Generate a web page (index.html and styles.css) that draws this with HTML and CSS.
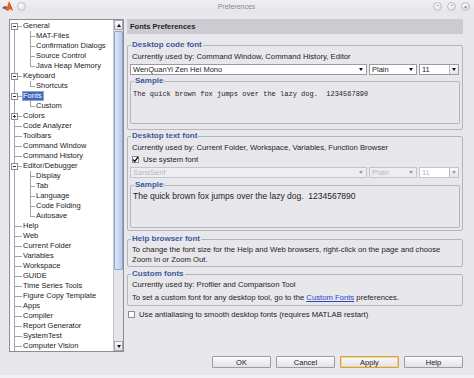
FILE: index.html
```html
<!DOCTYPE html>
<html lang="en">
<head>
  <meta charset="UTF-8">
  <title>Preferences</title>
  <link rel="stylesheet" href="styles.css">
</head>
<body>
<div class="window">

  <!-- title bar -->
  <div class="titlebar">
    <svg class="logo" width="11" height="11" viewBox="0 0 11 11">
      <path d="M0 7 L3 5 L5 6 L7 0 L11 10 L8 8 L6 10 Z" fill="#e8601c"/>
      <path d="M0 7 L3 5 L5 6 L3.5 8 Z" fill="#3a6fb5"/>
      <path d="M7 0 L11 10 L9 7 Z" fill="#b8320e"/>
    </svg>
    <span class="menu-dot"></span>
    <span class="title">Preferences</span>
    <span class="wbtns">
      <span class="wbtn">&#711;</span>
      <span class="wbtn">&#710;</span>
      <span class="wbtn">&#215;</span>
    </span>
  </div>

  <div class="main">
    <!-- navigation tree -->
    <div class="tree-panel">
      <div class="tree">
        <div class="row"><span class="c0 b top"><span class="x"></span></span><span class="t">General</span></div>
        <div class="row"><span class="c0"></span><span class="c1 b"></span><span class="t">MAT-Files</span></div>
        <div class="row"><span class="c0"></span><span class="c1 b"></span><span class="t">Confirmation Dialogs</span></div>
        <div class="row"><span class="c0"></span><span class="c1 b"></span><span class="t">Source Control</span></div>
        <div class="row"><span class="c0"></span><span class="c1 l"></span><span class="t">Java Heap Memory</span></div>
        <div class="row"><span class="c0 b"><span class="x"></span></span><span class="t">Keyboard</span></div>
        <div class="row"><span class="c0"></span><span class="c1 l"></span><span class="t">Shortcuts</span></div>
        <div class="row"><span class="c0 b"><span class="x"></span></span><span class="t sel">Fonts</span></div>
        <div class="row"><span class="c0"></span><span class="c1 l"></span><span class="t">Custom</span></div>
        <div class="row"><span class="c0 b"><span class="x plus"></span></span><span class="t">Colors</span></div>
        <div class="row"><span class="c0 b"></span><span class="t">Code Analyzer</span></div>
        <div class="row"><span class="c0 b"></span><span class="t">Toolbars</span></div>
        <div class="row"><span class="c0 b"></span><span class="t">Command Window</span></div>
        <div class="row"><span class="c0 b"></span><span class="t">Command History</span></div>
        <div class="row"><span class="c0 b"><span class="x"></span></span><span class="t">Editor/Debugger</span></div>
        <div class="row"><span class="c0"></span><span class="c1 b"></span><span class="t">Display</span></div>
        <div class="row"><span class="c0"></span><span class="c1 b"></span><span class="t">Tab</span></div>
        <div class="row"><span class="c0"></span><span class="c1 b"></span><span class="t">Language</span></div>
        <div class="row"><span class="c0"></span><span class="c1 b"></span><span class="t">Code Folding</span></div>
        <div class="row"><span class="c0"></span><span class="c1 l"></span><span class="t">Autosave</span></div>
        <div class="row"><span class="c0 b"></span><span class="t">Help</span></div>
        <div class="row"><span class="c0 b"></span><span class="t">Web</span></div>
        <div class="row"><span class="c0 b"></span><span class="t">Current Folder</span></div>
        <div class="row"><span class="c0 b"></span><span class="t">Variables</span></div>
        <div class="row"><span class="c0 b"></span><span class="t">Workspace</span></div>
        <div class="row"><span class="c0 b"></span><span class="t">GUIDE</span></div>
        <div class="row"><span class="c0 b"></span><span class="t">Time Series Tools</span></div>
        <div class="row"><span class="c0 b"></span><span class="t">Figure Copy Template</span></div>
        <div class="row"><span class="c0 b"></span><span class="t">Apps</span></div>
        <div class="row"><span class="c0 b"></span><span class="t">Compiler</span></div>
        <div class="row"><span class="c0 b"></span><span class="t">Report Generator</span></div>
        <div class="row"><span class="c0 b"></span><span class="t">SystemTest</span></div>
        <div class="row"><span class="c0 b"></span><span class="t">Computer Vision</span></div>
      </div>
      <div class="scrollbar">
        <div class="arrow up"></div>
        <div class="track"><div class="thumb"></div></div>
        <div class="arrow down"></div>
      </div>
    </div>

    <!-- fonts preferences -->
    <div class="content">
      <div class="header">Fonts Preferences</div>

      <fieldset class="group g-code">
        <legend>Desktop code font</legend>
        <div class="line">Currently used by: Command Window, Command History, Editor</div>
        <div class="combos">
          <div class="combo w-font">WenQuanYi Zen Hei Mono<span class="tri"></span></div>
          <div class="combo w-style">Plain<span class="tri"></span></div>
          <div class="combo w-size edit">11<span class="btn-tri"><span class="tri"></span></span></div>
        </div>
        <fieldset class="sample">
          <legend>Sample</legend>
          <div class="mono">The quick brown fox jumps over the lazy dog.  1234567890</div>
        </fieldset>
      </fieldset>

      <fieldset class="group g-text">
        <legend>Desktop text font</legend>
        <div class="line">Currently used by: Current Folder, Workspace, Variables, Function Browser</div>
        <div class="check-row">
          <span class="check"><svg width="7" height="7" viewBox="0 0 7 7"><path d="M1 3.5 L2.8 5.5 L6 1" fill="none" stroke="#111" stroke-width="1.3"/></svg></span>
          Use system font
        </div>
        <div class="combos">
          <div class="combo w-font off">SansSerif<span class="tri"></span></div>
          <div class="combo w-style off">Plain<span class="tri"></span></div>
          <div class="combo w-size edit off">11<span class="btn-tri"><span class="tri"></span></span></div>
        </div>
        <fieldset class="sample">
          <legend>Sample</legend>
          <div class="sans">The quick brown fox jumps over the lazy dog.  1234567890</div>
        </fieldset>
      </fieldset>

      <fieldset class="group g-help">
        <legend>Help browser font</legend>
        <div class="line">To change the font size for the Help and Web browsers, right-click on the page and choose</div>
        <div class="line next">Zoom In or Zoom Out.</div>
      </fieldset>

      <fieldset class="group g-custom">
        <legend>Custom fonts</legend>
        <div class="line">Currently used by: Profiler and Comparison Tool</div>
        <div class="line gap">To set a custom font for any desktop tool, go to the <a class="link">Custom Fonts</a> preferences.</div>
      </fieldset>

      <div class="check-row aa">
        <span class="check"></span>
        Use antialiasing to smooth desktop fonts (requires MATLAB restart)
      </div>
    </div>
  </div>

  <div class="buttons">
    <button class="btn">OK</button>
    <button class="btn">Cancel</button>
    <button class="btn default">Apply</button>
    <button class="btn">Help</button>
  </div>
</div>
</body>
</html>
```

FILE: styles.css
```css
* {
  box-sizing: border-box;
}
body {
  margin: 0;
  background: #e8e8ec;
  font-family: "Liberation Sans", Arial, sans-serif;
  font-size: 7.5px;
  color: #1c1c1c;
}
.window {
  width: 474px;
  height: 378px;
  overflow: hidden;
  border-bottom: 3px solid #f2f2f4;
}

/* title bar */
.titlebar {
  height: 13px;
  display: flex;
  align-items: center;
  padding: 0 4px 0 2px;
  background: linear-gradient(#f0f0f2, #e6e6ea);
}
.logo {
  flex: none;
}
.menu-dot {
  width: 9px;
  height: 9px;
  margin-left: 4px;
  border-radius: 50%;
  border: 1px solid #c4c4c8;
  background: radial-gradient(circle at 40% 35%, #ffffff, #d8d8dc);
}
.title {
  flex: 1;
  text-align: center;
  color: #8a8a8e;
  font-size: 7px;
  padding-left: 14px;
}
.wbtns {
  display: flex;
  gap: 5px;
}
.wbtn {
  width: 9px;
  height: 9px;
  border-radius: 50%;
  border: 1px solid #c0c0c4;
  background: radial-gradient(circle at 40% 35%, #ffffff, #d4d4d8);
  font-size: 6px;
  line-height: 8px;
  text-align: center;
  color: #555;
}

/* layout */
.main {
  display: flex;
  gap: 3px;
  height: 339px;
  padding: 6px 11px 0 9px;
}

/* tree */
.tree-panel {
  width: 115px;
  height: 333px;
  flex: none;
  display: flex;
  border: 1px solid #8c8c98;
  background: #ffffff;
}
.tree {
  flex: 1;
  overflow: hidden;
  padding-top: 1px;
  --ln: #a4a4a8;
}
.row {
  display: flex;
  align-items: center;
  height: 10px;
  white-space: nowrap;
}
.c0, .c1 {
  flex: none;
  height: 10px;
  display: flex;
  align-items: center;
}
.c0 {
  width: 12px;
  background: linear-gradient(var(--ln), var(--ln)) 4px 0 / 1px 100% no-repeat;
}
.c0.b {
  background:
    linear-gradient(var(--ln), var(--ln)) 4px 0 / 1px 100% no-repeat,
    linear-gradient(var(--ln), var(--ln)) 4px 5px / 8px 1px no-repeat;
}
.c0.top {
  background:
    linear-gradient(var(--ln), var(--ln)) 4px 5px / 1px 5px no-repeat,
    linear-gradient(var(--ln), var(--ln)) 4px 5px / 8px 1px no-repeat;
}
.c1 {
  width: 13px;
}
.c1.b {
  background:
    linear-gradient(var(--ln), var(--ln)) 8px 0 / 1px 100% no-repeat,
    linear-gradient(var(--ln), var(--ln)) 8px 5px / 5px 1px no-repeat;
}
.c1.l {
  background:
    linear-gradient(var(--ln), var(--ln)) 8px 0 / 1px 6px no-repeat,
    linear-gradient(var(--ln), var(--ln)) 8px 5px / 5px 1px no-repeat;
}
.x {
  width: 7px;
  height: 7px;
  margin-left: 1px;
  border: 1px solid #8c8c90;
  background: #fff linear-gradient(#333, #333) 1px 2px / 3px 1px no-repeat;
}
.x.plus {
  background:
    linear-gradient(#333, #333) 1px 2px / 3px 1px no-repeat,
    linear-gradient(#333, #333) 2px 1px / 1px 3px no-repeat,
    #fff;
}
.t {
  padding: 0 1px;
  line-height: 10px;
}
.t.sel {
  background: #3f68b4;
  color: #ffffff;
  outline: 1px solid #8aa6d8;
  outline-offset: -1px;
  padding: 0 2px 0 1px;
}

/* scrollbar */
.scrollbar {
  width: 10px;
  flex: none;
  display: flex;
  flex-direction: column;
  background: #e6e6ea;
  border-left: 1px solid #c4c4cc;
}
.arrow {
  height: 10px;
  border: 1px solid #a8a8b0;
  background: linear-gradient(#fafafa, #e0e0e4);
  display: flex;
  align-items: center;
  justify-content: center;
}
.arrow::after {
  content: "";
  border-left: 2.5px solid transparent;
  border-right: 2.5px solid transparent;
}
.arrow.up::after {
  border-bottom: 3px solid #111;
}
.arrow.down::after {
  border-top: 3px solid #111;
}
.track {
  flex: 1;
  padding-top: 1px;
}
.thumb {
  height: 239px;
  border: 1px solid #90a6cc;
  border-radius: 1px;
  background: linear-gradient(to right, #dbe6f6, #b8cbe8);
}

/* content */
.content {
  flex: 1;
  display: flex;
  flex-direction: column;
  font-size: 7.7px;
}
.header {
  height: 15px;
  line-height: 15px;
  padding-left: 3px;
  background: #cbcbd1;
  font-weight: bold;
  font-size: 7.5px;
  color: #222;
  margin-bottom: 6px;
}
fieldset {
  margin: 0;
  min-width: 0;
  border: 1px solid #b4b4bc;
  border-radius: 2px;
}
legend {
  padding: 0 1px;
  margin-left: 1px;
  line-height: 10px;
  font-size: 8px;
  font-weight: bold;
  color: #3a5a98;
}
.group {
  padding: 0 2px 5px 2px;
}
.line {
  line-height: 10px;
  padding: 2px 0 0 2px;
}
.line.next {
  padding-top: 0;
}
.line.gap {
  padding-top: 3px;
}
.combos {
  display: flex;
  gap: 2px;
  margin-top: 2px;
}
.combo {
  height: 11px;
  line-height: 9px;
  padding-left: 2px;
  border: 1px solid #9a9aa4;
  background: #ffffff;
  display: flex;
  justify-content: space-between;
  align-items: center;
  padding-right: 3px;
  font-size: 7.5px;
}
.w-font { width: 237px; }
.w-style { width: 48px; }
.w-size { width: 40px; }
.combo.edit {
  padding-right: 0;
}
.tri {
  border-left: 2.5px solid transparent;
  border-right: 2.5px solid transparent;
  border-top: 3px solid #111;
}
.btn-tri {
  width: 9px;
  height: 9px;
  border-left: 1px solid #b8b8c0;
  background: linear-gradient(#fafafa, #e4e4e8);
  display: flex;
  align-items: center;
  justify-content: center;
}
.combo.off {
  color: #b6b6bc;
  border-color: #c4c4cc;
  background: #eeeef2;
}
.combo.off .tri {
  border-top-color: #9a9aa0;
}
.combo.edit.off {
  background: #ffffff;
}
.sample {
  margin-top: 1px;
  height: 48px;
  padding: 3px 2px 0;
}
.mono {
  font-family: "Liberation Mono", "Courier New", monospace;
  font-size: 7px;
  line-height: 10px;
  white-space: pre;
}
.sans {
  line-height: 10px;
  font-size: 8.5px;
  white-space: pre;
}
.check-row {
  display: flex;
  align-items: center;
  gap: 4px;
  height: 10px;
  padding-left: 2px;
  margin-top: 1px;
}
.check {
  width: 7px;
  height: 7px;
  border: 1px solid #8c8c94;
  background: #ffffff;
  display: flex;
  align-items: center;
  justify-content: center;
}
.check svg {
  flex: none;
}

/* per-group spacing */
.g-code {
  margin-bottom: 1px;
}
.g-text {
  padding-bottom: 2px;
  margin-bottom: 3px;
}
.g-text .combos {
  margin-top: 3px;
}
.g-text .sample {
  margin-top: 2px;
  padding-top: 1px;
}
.g-help {
  padding-bottom: 1px;
  margin-bottom: 2px;
}
.g-help .line:first-of-type {
  padding-top: 1px;
}
.g-custom {
  padding-bottom: 2px;
}
.g-custom .line:first-of-type {
  padding-top: 1px;
}
.check-row.aa {
  margin-top: 3px;
  padding-left: 1px;
}
.link {
  color: #2746c4;
  text-decoration: underline;
}

/* dialog buttons */
.buttons {
  display: flex;
  justify-content: flex-end;
  gap: 5px;
  padding: 4px 11px 0 0;
}
.btn {
  width: 59px;
  height: 12px;
  padding: 0;
  font-family: "Liberation Sans", Arial, sans-serif;
  font-size: 7.5px;
  color: #222;
  border: 1px solid #9c9ca8;
  border-radius: 1px;
  background: linear-gradient(#fbfbfc, #e2e2e6);
}
.btn.default {
  border-color: #d0a24c;
  box-shadow: inset 0 0 0 1px #f0d494;
}
```
